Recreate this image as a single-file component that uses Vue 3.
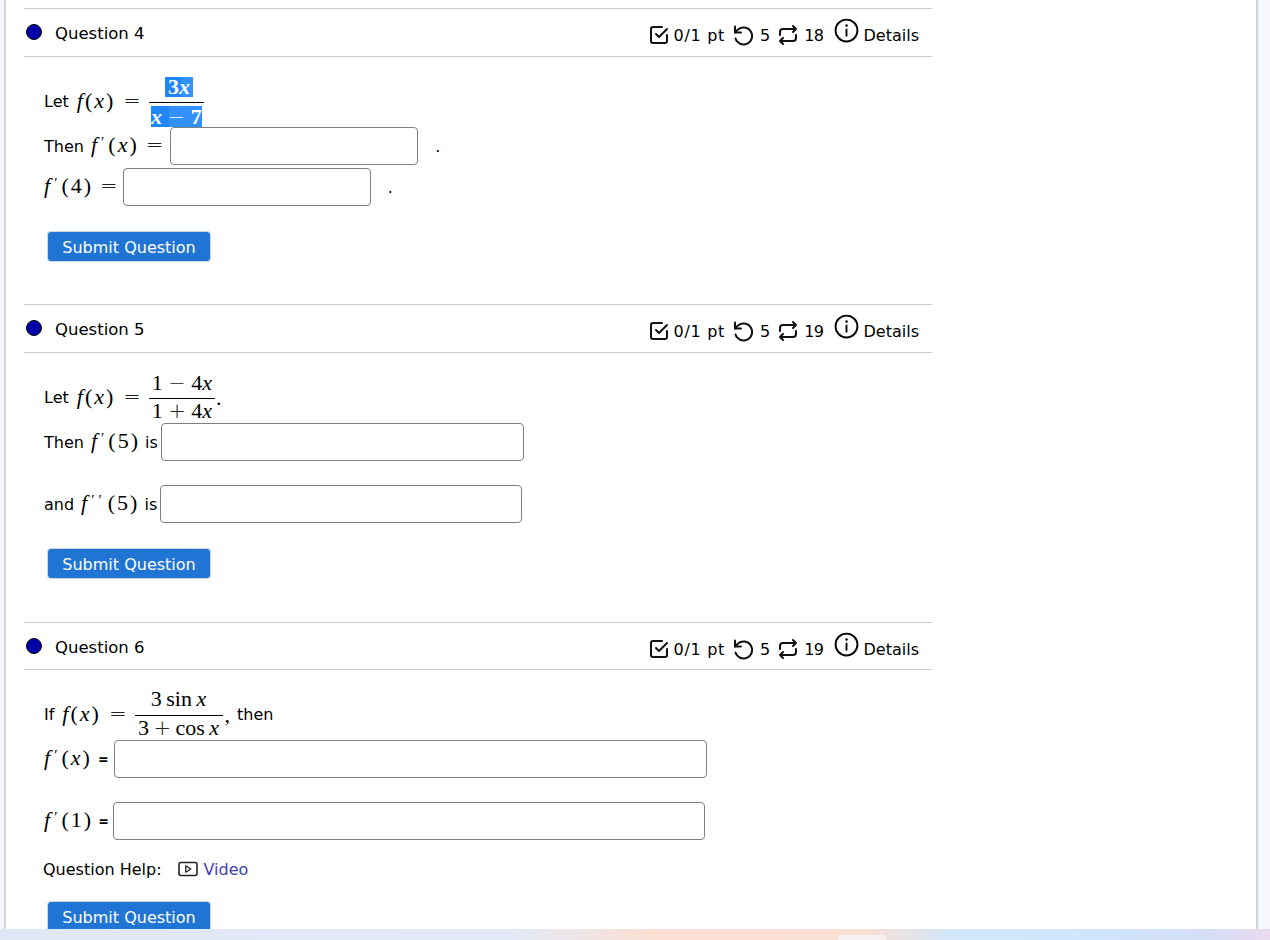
<script setup>
const q5 = 'Question 5'
</script>

<template>
  <div class="screen">
    <div class="panel">
      <section class="question q4">
        <header class="head">
          <div class="title"><span class="dot"></span><span class="qname">Question 4</span></div>
          <div class="meta">
            <svg class="ic" viewBox="0 0 24 24"><path d="M9 11l3 3l8 -8" /><path d="M20 12v6a2 2 0 0 1 -2 2h-12a2 2 0 0 1 -2 -2v-12a2 2 0 0 1 2 -2h9" /></svg>
            <span class="m1">0/1 pt</span>
            <svg class="ic ic2" viewBox="0 0 24 24"><path d="M4 3.500v6h6" /><path d="M4 9.500l3 -3a8.500 8.500 0 1 1 -2.500 9" /></svg>
            <span class="m2">5</span>
            <svg class="ic ic3" viewBox="0 0 24 24"><path d="M4 12v-3a3 3 0 0 1 3 -3h13m-3 -3l3 3l-3 3" /><path d="M20 12v3a3 3 0 0 1 -3 3h-13m3 3l-3 -3l3 -3" /></svg>
            <span class="m3">18</span>
            <svg class="info" viewBox="0 0 24 24"><circle cx="12" cy="12" r="10.500" /><path d="M12 11v6" /><path class="d" d="M12 7.200v.1" /></svg>
            <span class="m4">Details</span>
          </div>
        </header>
        <div class="body">
          <div class="row r1">
            <span>Let</span>
            <span class="mi fx">f<span class="up">(</span>x<span class="up">)</span></span>
            <span class="op eq">=</span>
            <span class="frac f4">
              <span class="num"><span class="hl hl-a">3<i>x</i></span></span>
              <span class="den"><span class="hl hl-b"><i>x</i> <span class="op">−</span> 7</span></span>
            </span>
          </div>
          <div class="row r2">
            <span>Then</span>
            <span class="mi fx2">f<span class="pr">′</span><span class="up">(</span>x<span class="up">)</span></span>
            <span class="op eq2">=</span>
            <input class="box w248" type="text" />
            <span class="period">.</span>
          </div>
          <div class="row r3">
            <span class="mi">f<span class="pr">′</span><span class="up">(4)</span></span>
            <span class="op eq2 eq-tight">=</span>
            <input class="box w248" type="text" />
            <span class="period">.</span>
          </div>
          <button class="submit s4">Submit Question</button>
        </div>
      </section>

      <section class="question q5">
        <header class="head">
          <div class="title"><span class="dot"></span><span class="qname">{{ q5 }}</span></div>
          <div class="meta">
            <svg class="ic" viewBox="0 0 24 24"><path d="M9 11l3 3l8 -8" /><path d="M20 12v6a2 2 0 0 1 -2 2h-12a2 2 0 0 1 -2 -2v-12a2 2 0 0 1 2 -2h9" /></svg>
            <span class="m1">0/1 pt</span>
            <svg class="ic ic2" viewBox="0 0 24 24"><path d="M4 3.500v6h6" /><path d="M4 9.500l3 -3a8.500 8.500 0 1 1 -2.500 9" /></svg>
            <span class="m2">5</span>
            <svg class="ic ic3" viewBox="0 0 24 24"><path d="M4 12v-3a3 3 0 0 1 3 -3h13m-3 -3l3 3l-3 3" /><path d="M20 12v3a3 3 0 0 1 -3 3h-13m3 3l-3 -3l3 -3" /></svg>
            <span class="m3">19</span>
            <svg class="info" viewBox="0 0 24 24"><circle cx="12" cy="12" r="10.500" /><path d="M12 11v6" /><path class="d" d="M12 7.200v.1" /></svg>
            <span class="m4">Details</span>
          </div>
        </header>
        <div class="body">
          <div class="row r1">
            <span>Let</span>
            <span class="mi fx">f<span class="up">(</span>x<span class="up">)</span></span>
            <span class="op eq">=</span>
            <span class="frac f5">
              <span class="num">1 <span class="op">−</span> 4<i>x</i></span>
              <span class="den">1 <span class="op">+</span> 4<i>x</i></span>
            </span>
            <span class="mo dot-end">.</span>
          </div>
          <div class="row r2b">
            <span>Then</span>
            <span class="mi fx2">f<span class="pr">′</span><span class="up">(5)</span></span>
            <span class="is">is</span>
            <input class="box w363" type="text" />
          </div>
          <div class="row r3b">
            <span>and</span>
            <span class="mi fx2">f<span class="pr pr2">′′</span><span class="up">(5)</span></span>
            <span class="is">is</span>
            <input class="box w362" type="text" />
          </div>
          <button class="submit s5">Submit Question</button>
        </div>
      </section>

      <section class="question q6">
        <header class="head head6">
          <div class="title"><span class="dot"></span><span class="qname">Question 6</span></div>
          <div class="meta">
            <svg class="ic" viewBox="0 0 24 24"><path d="M9 11l3 3l8 -8" /><path d="M20 12v6a2 2 0 0 1 -2 2h-12a2 2 0 0 1 -2 -2v-12a2 2 0 0 1 2 -2h9" /></svg>
            <span class="m1">0/1 pt</span>
            <svg class="ic ic2" viewBox="0 0 24 24"><path d="M4 3.500v6h6" /><path d="M4 9.500l3 -3a8.500 8.500 0 1 1 -2.500 9" /></svg>
            <span class="m2">5</span>
            <svg class="ic ic3" viewBox="0 0 24 24"><path d="M4 12v-3a3 3 0 0 1 3 -3h13m-3 -3l3 3l-3 3" /><path d="M20 12v3a3 3 0 0 1 -3 3h-13m3 3l-3 -3l3 -3" /></svg>
            <span class="m3">19</span>
            <svg class="info" viewBox="0 0 24 24"><circle cx="12" cy="12" r="10.500" /><path d="M12 11v6" /><path class="d" d="M12 7.200v.1" /></svg>
            <span class="m4">Details</span>
          </div>
        </header>
        <div class="body">
          <div class="row r1">
            <span>If</span>
            <span class="mi fx">f<span class="up">(</span>x<span class="up">)</span></span>
            <span class="op eq">=</span>
            <span class="frac f6">
              <span class="num">3 <span class="up">sin</span> <i>x</i></span>
              <span class="den">3 <span class="op">+</span> <span class="up">cos</span> <i>x</i></span>
            </span>
            <span class="mo comma">,</span>
            <span class="then">then</span>
          </div>
          <div class="row r2c">
            <span class="mi">f<span class="pr">′</span><span class="up">(</span>x<span class="up">)</span></span>
            <span class="eqs">=</span>
            <input class="box w593" type="text" />
          </div>
          <div class="row r3c">
            <span class="mi">f<span class="pr">′</span><span class="up">(1)</span></span>
            <span class="eqs">=</span>
            <input class="box w592" type="text" />
          </div>
          <div class="help">
            <span>Question Help:</span>
            <svg class="vid" viewBox="0 0 20 16"><rect x="1" y="1.500" width="18" height="13" rx="2" /><path class="tri" d="M7.800 4.800v6.400l5 -3.200z" /></svg>
            <a class="link">Video</a>
          </div>
          <button class="submit s6">Submit Question</button>
        </div>
      </section>
    </div>
    <div class="taskbar"><span class="tab"></span></div>
  </div>
</template>

<style>
html, body { margin: 0; background: #f7f8fe; }
</style>

<style scoped>
.screen {
  width: 1270px;
  height: 940px;
  display: flex;
  flex-direction: column;
  overflow: hidden;
  font-family: "DejaVu Sans", sans-serif;
  font-size: 16px;
  color: #000;
  background: #f7f8fe;
}
.panel {
  flex: 1;
  min-height: 0;
  width: 1250px;
  margin-left: 6px;
  box-sizing: border-box;
  background: #fff;
  overflow: hidden;
  padding: 8px 0 0 18px;
  box-shadow: -2px 0 1px #d5d5da, 2px 0 1px #d5d5da;
}
.question { width: 908px; }
.q4 { height: 296px; }
.q5 { height: 318px; }
.head {
  height: 47px;
  border-top: 1px solid #ccc;
  border-bottom: 1px solid #ccc;
  display: flex;
  justify-content: space-between;
}
.head6 { height: 46px; }
.title { display: flex; align-items: center; height: 47px; padding-left: 2px; }
.dot {
  width: 14px;
  height: 14px;
  border-radius: 50%;
  background: #0000a8;
  border: 1px solid #000;
  margin-top: -2px;
}
.qname { margin-left: 13px; font-size: 16.500px; margin-top: 1px; }
.meta { display: flex; align-items: center; height: 47px; padding-right: 13px; padding-top: 5px; box-sizing: border-box; }
.ic { width: 24px; height: 24px; fill: none; stroke: #111; stroke-width: 2; stroke-linecap: round; stroke-linejoin: round; }
.info { width: 25px; height: 25px; fill: none; stroke: #000; stroke-width: 1.800; stroke-linecap: round; margin-left: 10px; margin-top: -9px; }
.info .d { stroke-width: 2.400; }
.m1 { margin-left: 3px; letter-spacing: .7px; }
.ic2 { margin-left: 6px; }
.m2 { margin-left: 5px; }
.ic3 { margin-left: 6px; }
.m3 { margin-left: 4px; letter-spacing: -.5px; }
.m4 { margin-left: 5px; }

.body { padding-left: 20px; }
.row { display: flex; align-items: center; white-space: nowrap; }
.mi { font-family: "Liberation Serif", serif; font-style: italic; font-size: 22px; letter-spacing: 2px; margin-top: -2px; }
.up { font-style: normal; }
.pr { font-style: normal; font-size: 15px; vertical-align: 5px; margin: 0 2px; }
.pr2 { letter-spacing: 4px; }
.op { font-family: "DejaVu Sans", sans-serif; font-size: 21px; font-weight: 200; font-style: normal; color: #222; }
.mo { font-family: "Liberation Serif", serif; font-size: 22px; }
.fx { margin-left: 8px; }
.fx2 { margin-left: 7px; }
.eq { margin-left: 8px; margin-top: -2px; }
.eq2 { margin-left: 7px; margin-right: 7px; margin-top: -2px; }
.eq-tight { margin-right: 5px; }
.frac {
  display: inline-flex;
  flex-direction: column;
  align-items: center;
  font-family: "Liberation Serif", serif;
  font-size: 22px;
  margin-left: 8px;
}
.f4 { width: 55px; }
.f5 { width: 66px; }
.f6 { width: 88px; word-spacing: -1px; }
.num { border-bottom: 1.500px solid #000; width: 100%; text-align: center; height: 27px; line-height: 24px; }
.f6 .num { line-height: 21px; }
.den { height: 25px; line-height: 24px; }
.f4 .num, .f4 .den { display: flex; justify-content: center; width: 100%; }
.f4 .op { color: #fff; }
.hl { color: #fff; display: block; font-weight: 700; text-align: center; }
.hl-a { width: 28px; height: 20px; line-height: 20px; margin: 2px 0 0 5px; background: linear-gradient(90deg, #1f86ff 0 57%, #3390ff 57%); }
.hl-b { width: 51px; height: 21px; line-height: 21px; margin-top: 3px; background: linear-gradient(90deg, #1f86ff 0 35%, #3390ff 35%); }
.box {
  box-sizing: border-box;
  height: 38px;
  border: 1px solid #808080;
  border-radius: 4px;
  background: #fff;
  padding: 0;
  margin: 0;
  display: block;
}
.w248 { width: 248px; }
.w363 { width: 363px; }
.w362 { width: 362px; }
.w593 { width: 593px; }
.w592 { width: 592px; }
.period { margin-left: 17px; }
.is { margin-left: 5px; margin-right: 3px; }
.eqs { font-family: "Noto Sans", sans-serif; font-weight: 700; margin-left: 7px; margin-right: 5px; }
.r2c .eqs { margin-right: 6px; }
.r3c .eqs { margin-left: 6px; }
.r1 { height: 51px; margin-top: 19px; }
.r2 { height: 38px; }
.r3 { height: 38px; margin-top: 3px; }
.r2b { height: 38px; }
.r3b { height: 38px; margin-top: 24px; }
.r2c { height: 38px; }
.r3c { height: 38px; margin-top: 24px; }
.dot-end { margin-left: 1px; }
.comma { margin-left: 2px; }
.then { margin-left: 7px; }
.submit {
  display: block;
  box-sizing: border-box;
  width: 164px;
  height: 31px;
  margin: 0 0 0 3px;
  padding: 1px 0 0;
  background: #1f74d4;
  border: 1px solid #c9d6e6;
  border-radius: 4px;
  color: #fff;
  font-family: "DejaVu Sans", sans-serif;
  font-size: 16px;
}
.s4 { margin-top: 25px; }
.s5 { margin-top: 25px; }
.s6 { margin-top: 20px; }
.help { display: flex; align-items: center; height: 24px; margin-top: 17px; margin-left: -1px; }
.vid { width: 20px; height: 16px; margin-left: 16px; fill: none; stroke: #222; stroke-width: 1.600; }
.vid .tri { stroke-width: 1.300; stroke-linejoin: round; }
.link { color: #3f3fb0; margin-left: 6px; }
.taskbar {
  height: 11px;
  flex: none;
  position: relative;
  background: linear-gradient(90deg, #dfe6f6 0%, #e3e9f7 40%, #fbdfd2 52%, #fadfd3 68%, #d2e7fb 75%, #cfe6fc 85%, #d5def7 95%, #eadaf0 100%);
}
.tab {
  position: absolute;
  left: 838px;
  top: 6px;
  width: 48px;
  height: 5px;
  background: #f6f0f0;
  border-radius: 3px 3px 0 0;
}
</style>
